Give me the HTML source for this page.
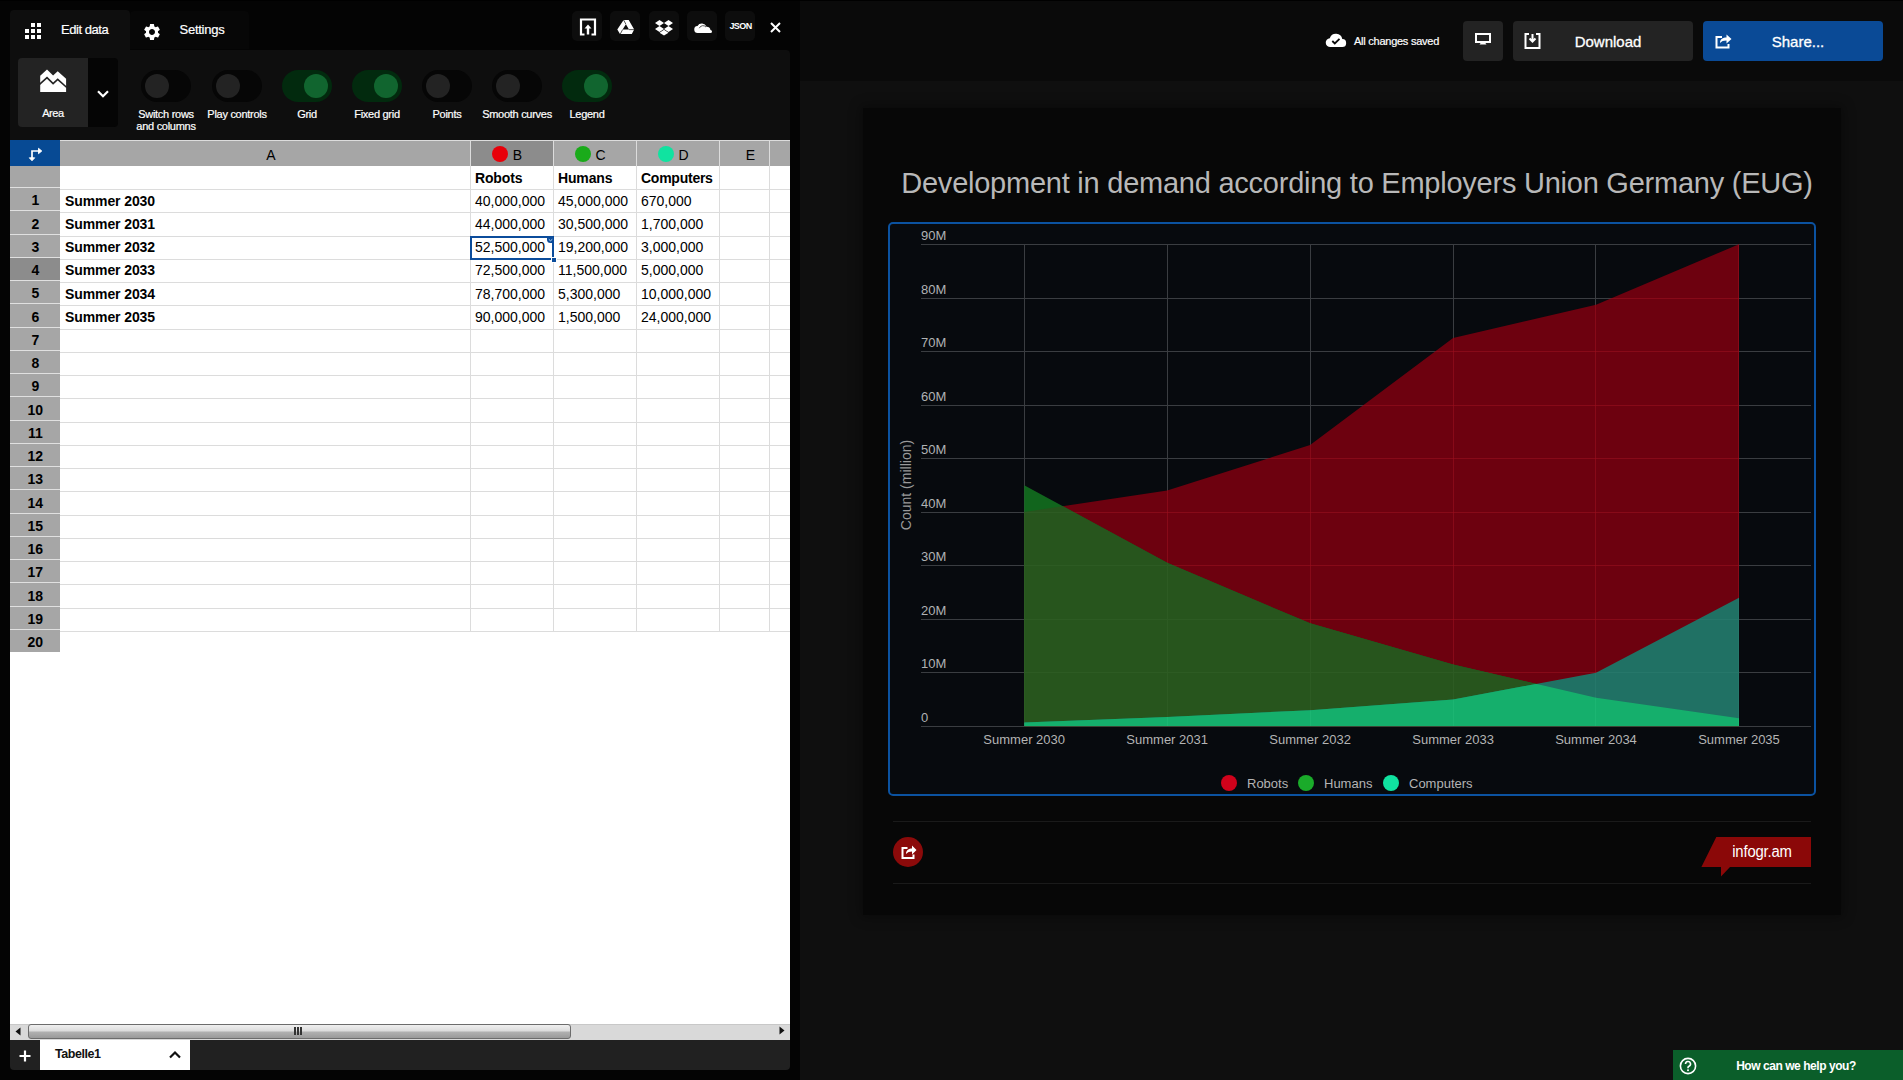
<!DOCTYPE html><html><head><meta charset="utf-8"><style>

*{box-sizing:border-box}
html,body{margin:0;padding:0}
body{width:1903px;height:1080px;overflow:hidden;position:relative;background:#040404;font-family:"Liberation Sans",sans-serif;color:#fff}
.ab{position:absolute}
.t{position:absolute;white-space:nowrap;line-height:1}
svg{position:absolute;overflow:visible}

</style></head><body>
<div class="ab" style="left:800px;top:0px;width:1103px;height:81px;background:#0a0a0a;"></div>
<div class="ab" style="left:800px;top:81px;width:1103px;height:999px;background:#0f0f0f;"></div>
<div class="ab" style="left:863px;top:108px;width:978px;height:807px;background:#070707;box-shadow:0 0 11px 3px rgba(0,0,0,0.32)"></div>
<svg style="left:1326px;top:33px" width="20" height="14" viewBox="0 0 20 14"><path d="M4.5 14h11.5a4 4 0 0 0 .3-8A6.5 6.5 0 0 0 3.8 5.2 4.4 4.4 0 0 0 4.5 14z" fill="#fff"/><path d="M6.3 8l2.5 2.5 4.7-4.7" fill="none" stroke="#0a0a0a" stroke-width="1.8"/></svg>
<div class="t" style="left:1354px;top:35.69px;font-size:11px;color:#fff;font-weight:normal;letter-spacing:-0.25px;-webkit-text-stroke:0.2px #fff">All changes saved</div>
<div class="ab" style="left:1463px;top:21px;width:40px;height:40px;background:#232323;border-radius:4px"></div>
<svg style="left:1475px;top:33px" width="16" height="12" viewBox="0 0 16 12"><rect x="1" y="1" width="14" height="8" fill="none" stroke="#fff" stroke-width="2"/><path d="M6 9.5h4l1.5 2h-7z" fill="#fff"/></svg>
<div class="ab" style="left:1513px;top:21px;width:180px;height:40px;background:#232323;border-radius:4px"></div>
<svg style="left:1524px;top:33px" width="18" height="16" viewBox="0 0 18 16"><path d="M5 1H1.5v14h14V1H12" fill="none" stroke="#fff" stroke-width="2"/><path d="M8.5 1v6.5M5.5 5.5l3 3 3-3" fill="none" stroke="#fff" stroke-width="2"/></svg>
<div class="t" style="left:1108px;width:1000px;text-align:center;top:34.20px;font-size:15px;color:#fff;font-weight:normal;-webkit-text-stroke:0.3px #fff">Download</div>
<div class="ab" style="left:1703px;top:21px;width:180px;height:40px;background:#0a4a96;border-radius:4px"></div>
<svg style="left:1715px;top:33px" width="17" height="16" viewBox="0 0 17 16"><path d="M7 4H1.5v10.5h12V11" fill="none" stroke="#fff" stroke-width="2"/><path d="M5 10c0-4 3-5.5 6.5-5.5V1.5L16.5 6l-5 4.5V7.5C8.5 7.5 6.5 8.3 5 10z" fill="#fff"/></svg>
<div class="t" style="left:1298px;width:1000px;text-align:center;top:34.20px;font-size:15px;color:#fff;font-weight:normal;-webkit-text-stroke:0.3px #fff">Share...</div>
<div class="t" style="left:857px;width:1000px;text-align:center;top:168.85px;font-size:29px;color:#b8b8b8;font-weight:normal;letter-spacing:-0.24px">Development in demand according to Employers Union Germany (EUG)</div>
<div class="ab" style="left:888px;top:222px;width:928px;height:574px;background:#070a0e;border:2px solid #0b52a0;border-radius:5px"></div>
<svg style="left:0;top:0" width="1903" height="1080"><line x1="921" x2="1811" y1="726.5" y2="726.5" stroke="#3a3d41" stroke-width="1"/><line x1="921" x2="1811" y1="672.5" y2="672.5" stroke="#3a3d41" stroke-width="1"/><line x1="921" x2="1811" y1="619.5" y2="619.5" stroke="#3a3d41" stroke-width="1"/><line x1="921" x2="1811" y1="565.5" y2="565.5" stroke="#3a3d41" stroke-width="1"/><line x1="921" x2="1811" y1="512.5" y2="512.5" stroke="#3a3d41" stroke-width="1"/><line x1="921" x2="1811" y1="458.5" y2="458.5" stroke="#3a3d41" stroke-width="1"/><line x1="921" x2="1811" y1="405.5" y2="405.5" stroke="#3a3d41" stroke-width="1"/><line x1="921" x2="1811" y1="351.5" y2="351.5" stroke="#3a3d41" stroke-width="1"/><line x1="921" x2="1811" y1="298.5" y2="298.5" stroke="#3a3d41" stroke-width="1"/><line x1="921" x2="1811" y1="244.5" y2="244.5" stroke="#3a3d41" stroke-width="1"/><line x1="1024.5" x2="1024.5" y1="244" y2="726" stroke="#3a3d41" stroke-width="1"/><line x1="1167.5" x2="1167.5" y1="244" y2="726" stroke="#3a3d41" stroke-width="1"/><line x1="1310.5" x2="1310.5" y1="244" y2="726" stroke="#3a3d41" stroke-width="1"/><line x1="1453.5" x2="1453.5" y1="244" y2="726" stroke="#3a3d41" stroke-width="1"/><line x1="1595.5" x2="1595.5" y1="244" y2="726" stroke="#3a3d41" stroke-width="1"/><line x1="1738.5" x2="1738.5" y1="244" y2="726" stroke="#3a3d41" stroke-width="1"/><defs><clipPath id="cpR"><polygon points="1024.20,511.98 1167.16,490.55 1310.12,445.03 1453.08,337.92 1596.04,304.71 1739.00,244.20 1739.00,726.20 1024.20,726.20"/></clipPath><clipPath id="cpH"><polygon points="1024.20,485.20 1167.16,562.85 1310.12,623.37 1453.08,664.61 1596.04,697.82 1739.00,718.17 1739.00,726.20 1024.20,726.20"/></clipPath></defs><g opacity="0.88"><polygon points="1024.20,511.98 1167.16,490.55 1310.12,445.03 1453.08,337.92 1596.04,304.71 1739.00,244.20 1739.00,726.20 1024.20,726.20" fill="#7c0010"/><g clip-path="url(#cpR)"><line x1="921" x2="1811" y1="726.5" y2="726.5" stroke="rgba(210,12,26,0.25)" stroke-width="1"/><line x1="921" x2="1811" y1="672.5" y2="672.5" stroke="rgba(210,12,26,0.25)" stroke-width="1"/><line x1="921" x2="1811" y1="619.5" y2="619.5" stroke="rgba(210,12,26,0.25)" stroke-width="1"/><line x1="921" x2="1811" y1="565.5" y2="565.5" stroke="rgba(210,12,26,0.25)" stroke-width="1"/><line x1="921" x2="1811" y1="512.5" y2="512.5" stroke="rgba(210,12,26,0.25)" stroke-width="1"/><line x1="921" x2="1811" y1="458.5" y2="458.5" stroke="rgba(210,12,26,0.25)" stroke-width="1"/><line x1="921" x2="1811" y1="405.5" y2="405.5" stroke="rgba(210,12,26,0.25)" stroke-width="1"/><line x1="921" x2="1811" y1="351.5" y2="351.5" stroke="rgba(210,12,26,0.25)" stroke-width="1"/><line x1="921" x2="1811" y1="298.5" y2="298.5" stroke="rgba(210,12,26,0.25)" stroke-width="1"/><line x1="921" x2="1811" y1="244.5" y2="244.5" stroke="rgba(210,12,26,0.25)" stroke-width="1"/><line x1="1024.5" x2="1024.5" y1="244" y2="726" stroke="rgba(210,12,26,0.25)" stroke-width="1"/><line x1="1167.5" x2="1167.5" y1="244" y2="726" stroke="rgba(210,12,26,0.25)" stroke-width="1"/><line x1="1310.5" x2="1310.5" y1="244" y2="726" stroke="rgba(210,12,26,0.25)" stroke-width="1"/><line x1="1453.5" x2="1453.5" y1="244" y2="726" stroke="rgba(210,12,26,0.25)" stroke-width="1"/><line x1="1595.5" x2="1595.5" y1="244" y2="726" stroke="rgba(210,12,26,0.25)" stroke-width="1"/><line x1="1738.5" x2="1738.5" y1="244" y2="726" stroke="rgba(210,12,26,0.25)" stroke-width="1"/></g><polygon points="1024.20,485.20 1167.16,562.85 1310.12,623.37 1453.08,664.61 1596.04,697.82 1739.00,718.17 1739.00,726.20 1024.20,726.20" fill="#137220"/><polygon points="1024.20,485.20 1167.16,562.85 1310.12,623.37 1453.08,664.61 1596.04,697.82 1739.00,718.17 1739.00,726.20 1024.20,726.20" fill="#2c6020" clip-path="url(#cpR)"/><polygon points="1024.20,722.61 1167.16,717.10 1310.12,710.13 1453.08,699.42 1596.04,672.64 1739.00,597.67 1739.00,726.20 1024.20,726.20" fill="#248070" clip-path="url(#cpR)"/><polygon points="1024.20,722.61 1167.16,717.10 1310.12,710.13 1453.08,699.42 1596.04,672.64 1739.00,597.67 1739.00,726.20 1024.20,726.20" fill="#18c679" clip-path="url(#cpH)"/></g></svg>
<div class="t" style="left:921px;top:710.80px;font-size:13px;color:#b0b2b4;font-weight:normal;">0</div>
<div class="t" style="left:921px;top:656.80px;font-size:13px;color:#b0b2b4;font-weight:normal;">10M</div>
<div class="t" style="left:921px;top:603.80px;font-size:13px;color:#b0b2b4;font-weight:normal;">20M</div>
<div class="t" style="left:921px;top:549.80px;font-size:13px;color:#b0b2b4;font-weight:normal;">30M</div>
<div class="t" style="left:921px;top:496.80px;font-size:13px;color:#b0b2b4;font-weight:normal;">40M</div>
<div class="t" style="left:921px;top:442.80px;font-size:13px;color:#b0b2b4;font-weight:normal;">50M</div>
<div class="t" style="left:921px;top:389.80px;font-size:13px;color:#b0b2b4;font-weight:normal;">60M</div>
<div class="t" style="left:921px;top:335.80px;font-size:13px;color:#b0b2b4;font-weight:normal;">70M</div>
<div class="t" style="left:921px;top:282.80px;font-size:13px;color:#b0b2b4;font-weight:normal;">80M</div>
<div class="t" style="left:921px;top:228.80px;font-size:13px;color:#b0b2b4;font-weight:normal;">90M</div>
<div class="t" style="left:524.2px;width:1000px;text-align:center;top:733.00px;font-size:13px;color:#b4b4b4;font-weight:normal;">Summer 2030</div>
<div class="t" style="left:667.1600000000001px;width:1000px;text-align:center;top:733.00px;font-size:13px;color:#b4b4b4;font-weight:normal;">Summer 2031</div>
<div class="t" style="left:810.1200000000001px;width:1000px;text-align:center;top:733.00px;font-size:13px;color:#b4b4b4;font-weight:normal;">Summer 2032</div>
<div class="t" style="left:953.0799999999999px;width:1000px;text-align:center;top:733.00px;font-size:13px;color:#b4b4b4;font-weight:normal;">Summer 2033</div>
<div class="t" style="left:1096.04px;width:1000px;text-align:center;top:733.00px;font-size:13px;color:#b4b4b4;font-weight:normal;">Summer 2034</div>
<div class="t" style="left:1239.0px;width:1000px;text-align:center;top:733.00px;font-size:13px;color:#b4b4b4;font-weight:normal;">Summer 2035</div>
<div class="t" style="left:906px;top:485px;font-size:14px;color:#9a9a9a;transform:translate(-50%,-50%) rotate(-90deg);">Count (million)</div>
<div class="ab" style="left:1221px;top:775px;width:16px;height:16px;background:#d0021b;border-radius:50%"></div>
<div class="t" style="left:1247px;top:777.00px;font-size:13px;color:#b4b4b4;font-weight:normal;">Robots</div>
<div class="ab" style="left:1298px;top:775px;width:16px;height:16px;background:#1aab2a;border-radius:50%"></div>
<div class="t" style="left:1324px;top:777.00px;font-size:13px;color:#b4b4b4;font-weight:normal;">Humans</div>
<div class="ab" style="left:1383px;top:775px;width:16px;height:16px;background:#10e3a0;border-radius:50%"></div>
<div class="t" style="left:1409px;top:777.00px;font-size:13px;color:#b4b4b4;font-weight:normal;">Computers</div>
<div class="ab" style="left:893px;top:821px;width:918px;height:1px;background:#1a1a1a;"></div>
<div class="ab" style="left:893px;top:883px;width:918px;height:1px;background:#1a1a1a;"></div>
<div class="ab" style="left:893px;top:837px;width:30px;height:30px;background:#8b0a0a;border-radius:50%"></div>
<svg style="left:901px;top:844px" width="16" height="15" viewBox="0 0 16 15"><path d="M6.5 4H1.5v10h11V10.5" fill="none" stroke="#fff" stroke-width="2"/><path d="M5 10c0-4 3-5.5 6-5.5V1.5L15.5 6l-4.5 4.5V7.5C8.5 7.5 6.5 8.3 5 10z" fill="#fff"/></svg>
<svg style="left:0;top:0" width="1" height="1"><path d="M1716.3 837H1811V867H1730L1721 876.5V867H1701.4z" fill="#8b0808"/></svg>
<div class="t" style="left:1261.5px;width:1000px;text-align:center;top:843.96px;font-size:16px;color:#fff;font-weight:normal;letter-spacing:-0.2px;transform:scaleX(0.93)">infogr.am</div>
<div class="ab" style="left:1673px;top:1050px;width:230px;height:30px;background:#0b5e2a;"></div>
<svg style="left:1679px;top:1057px" width="18" height="18" viewBox="0 0 18 18"><circle cx="9" cy="9" r="7.6" fill="none" stroke="#fff" stroke-width="1.6"/><path d="M6.5 7a2.5 2.5 0 1 1 3.5 2.3c-.7.3-1 .8-1 1.5v.5" fill="none" stroke="#fff" stroke-width="1.6"/><circle cx="9" cy="13.3" r="1" fill="#fff"/></svg>
<div class="t" style="left:1296px;width:1000px;text-align:center;top:1059.84px;font-size:12px;color:#fff;font-weight:bold;letter-spacing:-0.45px">How can we help you?</div>
<div class="ab" style="left:10px;top:10px;width:120px;height:41px;background:#0e0e0e;border-radius:4px 4px 0 0"></div>
<div class="ab" style="left:130px;top:11px;width:119px;height:38px;background:#070707;border-radius:4px 4px 0 0"></div>
<div class="ab" style="left:10px;top:50px;width:780px;height:90px;background:#0e0e0e;border-radius:0 4px 0 0"></div>
<div class="ab" style="left:31px;top:23px;width:4.3px;height:4px;background:#fff;"></div>
<div class="ab" style="left:37px;top:23px;width:4.3px;height:4px;background:#fff;"></div>
<div class="ab" style="left:25px;top:29px;width:4.3px;height:4px;background:#fff;"></div>
<div class="ab" style="left:31px;top:29px;width:4.3px;height:4px;background:#fff;"></div>
<div class="ab" style="left:37px;top:29px;width:4.3px;height:4px;background:#fff;"></div>
<div class="ab" style="left:25px;top:35px;width:4.3px;height:4px;background:#fff;"></div>
<div class="ab" style="left:31px;top:35px;width:4.3px;height:4px;background:#fff;"></div>
<div class="ab" style="left:37px;top:35px;width:4.3px;height:4px;background:#fff;"></div>
<div class="t" style="left:61px;top:23.00px;font-size:13px;color:#fff;font-weight:normal;letter-spacing:-0.45px;-webkit-text-stroke:0.2px #fff">Edit data</div>
<svg style="left:142px;top:21.5px" width="20" height="20" viewBox="0 0 24 24"><path fill="#fff" d="M19.14 12.94c.04-.3.06-.61.06-.94 0-.32-.02-.64-.07-.94l2.03-1.58a.49.49 0 0 0 .12-.61l-1.92-3.32a.49.49 0 0 0-.59-.22l-2.39.96c-.5-.38-1.03-.7-1.62-.94l-.36-2.54a.484.484 0 0 0-.48-.41h-3.84c-.24 0-.43.17-.47.41l-.36 2.54c-.59.24-1.13.57-1.62.94l-2.39-.96a.49.49 0 0 0-.59.22L2.74 8.87c-.12.21-.08.47.12.61l2.03 1.58c-.05.3-.09.63-.09.94s.02.64.07.94l-2.03 1.58a.49.49 0 0 0-.12.61l1.92 3.32c.12.22.37.29.59.22l2.39-.96c.5.38 1.03.7 1.62.94l.36 2.54c.05.24.24.41.48.41h3.84c.24 0 .44-.17.47-.41l.36-2.54c.59-.24 1.13-.56 1.62-.94l2.39.96c.22.08.47 0 .59-.22l1.92-3.32c.12-.22.07-.47-.12-.61l-2.01-1.58zM12 15.6c-1.98 0-3.6-1.62-3.6-3.6s1.62-3.6 3.6-3.6 3.6 1.62 3.6 3.6-1.62 3.6-3.6 3.6z"/></svg>
<div class="t" style="left:179.5px;top:23.00px;font-size:13px;color:#fff;font-weight:normal;letter-spacing:-0.25px;-webkit-text-stroke:0.2px #fff">Settings</div>
<div class="ab" style="left:572px;top:11px;width:30px;height:30px;background:#0d0d0d;border-radius:5px"></div>
<div class="ab" style="left:610px;top:11px;width:30px;height:30px;background:#0d0d0d;border-radius:5px"></div>
<div class="ab" style="left:649px;top:11px;width:30px;height:30px;background:#0d0d0d;border-radius:5px"></div>
<div class="ab" style="left:687px;top:11px;width:30px;height:30px;background:#0d0d0d;border-radius:5px"></div>
<div class="ab" style="left:725px;top:11px;width:30px;height:30px;background:#0d0d0d;border-radius:5px"></div>
<svg style="left:579px;top:18px" width="18" height="18" viewBox="0 0 18 18"><path d="M5.5 16.5H2V1.5h14v15h-3.5" fill="none" stroke="#fff" stroke-width="2.2"/><path d="M9 6.5l-3.5 4h2.3v6h2.4v-6h2.3z" fill="#fff"/></svg>
<svg style="left:0;top:0" width="1" height="1"><path fill-rule="evenodd" d="M623.6 20H628.7L634.2 29.4 631.8 34H620L617.3 29.4z M625.9 24.2L622.6 29.6H629z" fill="#fff"/><path d="M629 29.6H634.5M622.6 29.6L620.2 34.2M625.9 24.2L623.6 20" stroke="#0d0d0d" stroke-width="0.7" fill="none"/></svg>
<svg style="left:655px;top:20px" width="18" height="15" viewBox="0 0 18 15"><path d="M4.5 0L0 3l4.5 3L9 3z M13.5 0L9 3l4.5 3L18 3z M0 9l4.5 3L9 9 4.5 6z M18 9l-4.5 3L9 9l4.5-3z M4.5 12.7L9 15.5l4.5-2.8L9 9.8z" fill="#fff"/></svg>
<svg style="left:694px;top:21px" width="18" height="12" viewBox="0 0 18 12"><path d="M4 12h12.5a1.5 1.5 0 0 0 0-3 4 4 0 0 0-4-3.2A5 5 0 0 0 3.5 5 3.5 3.5 0 0 0 4 12z" fill="#fff"/><path d="M5.3 7.2A4 4 0 0 1 12 6" stroke="#0d0d0d" stroke-width="0.7" fill="none"/></svg>
<div class="t" style="left:240.5px;width:1000px;text-align:center;top:21.88px;font-size:9px;color:#fff;font-weight:bold;letter-spacing:-0.6px">JSON</div>
<svg style="left:770px;top:22px" width="11" height="11" viewBox="0 0 11 11"><path d="M1 1l9 9M10 1l-9 9" stroke="#fff" stroke-width="2"/></svg>
<div class="ab" style="left:18px;top:58px;width:70px;height:69px;background:#232323;border-radius:4px 0 0 4px"></div>
<div class="ab" style="left:88px;top:58px;width:30px;height:69px;background:#050505;border-radius:0 4px 4px 0"></div>
<svg style="left:0;top:0" width="1" height="1"><path d="M40.2 75.7L47 69.6 53.1 75.4 57.7 71.3 66.1 78.8V92H40.2z" fill="#fff"/><path d="M39.5 84.3L47 77.6 53.1 83.6 57.7 79.4 66.8 87.5" fill="none" stroke="#232323" stroke-width="1.6"/></svg>
<div class="t" style="left:-447px;width:1000px;text-align:center;top:108.29px;font-size:11px;color:#fff;font-weight:normal;letter-spacing:-0.4px;-webkit-text-stroke:0.2px #fff">Area</div>
<svg style="left:97px;top:90px" width="12" height="8" viewBox="0 0 12 8"><path d="M1 1.2l5 5 5-5" fill="none" stroke="#fff" stroke-width="2.2"/></svg>
<div class="ab" style="left:141px;top:70px;width:50px;height:32px;background:#060606;border-radius:16px"></div>
<div class="ab" style="left:145px;top:74px;width:24px;height:24px;background:#232323;border-radius:50%"></div>
<div class="t" style="left:-334px;width:1000px;text-align:center;top:109.29px;font-size:11px;color:#fff;font-weight:normal;letter-spacing:-0.28px;-webkit-text-stroke:0.2px #fff">Switch rows</div>
<div class="ab" style="left:212px;top:70px;width:50px;height:32px;background:#060606;border-radius:16px"></div>
<div class="ab" style="left:216px;top:74px;width:24px;height:24px;background:#232323;border-radius:50%"></div>
<div class="t" style="left:-263px;width:1000px;text-align:center;top:109.29px;font-size:11px;color:#fff;font-weight:normal;letter-spacing:-0.28px;-webkit-text-stroke:0.2px #fff">Play controls</div>
<div class="ab" style="left:282px;top:70px;width:50px;height:32px;background:#022a0e;border-radius:16px"></div>
<div class="ab" style="left:304px;top:74px;width:24px;height:24px;background:#11652f;border-radius:50%"></div>
<div class="t" style="left:-193px;width:1000px;text-align:center;top:109.29px;font-size:11px;color:#fff;font-weight:normal;letter-spacing:-0.28px;-webkit-text-stroke:0.2px #fff">Grid</div>
<div class="ab" style="left:352px;top:70px;width:50px;height:32px;background:#022a0e;border-radius:16px"></div>
<div class="ab" style="left:374px;top:74px;width:24px;height:24px;background:#11652f;border-radius:50%"></div>
<div class="t" style="left:-123px;width:1000px;text-align:center;top:109.29px;font-size:11px;color:#fff;font-weight:normal;letter-spacing:-0.28px;-webkit-text-stroke:0.2px #fff">Fixed grid</div>
<div class="ab" style="left:422px;top:70px;width:50px;height:32px;background:#060606;border-radius:16px"></div>
<div class="ab" style="left:426px;top:74px;width:24px;height:24px;background:#232323;border-radius:50%"></div>
<div class="t" style="left:-53px;width:1000px;text-align:center;top:109.29px;font-size:11px;color:#fff;font-weight:normal;letter-spacing:-0.28px;-webkit-text-stroke:0.2px #fff">Points</div>
<div class="ab" style="left:492px;top:70px;width:50px;height:32px;background:#060606;border-radius:16px"></div>
<div class="ab" style="left:496px;top:74px;width:24px;height:24px;background:#232323;border-radius:50%"></div>
<div class="t" style="left:17px;width:1000px;text-align:center;top:109.29px;font-size:11px;color:#fff;font-weight:normal;letter-spacing:-0.28px;-webkit-text-stroke:0.2px #fff">Smooth curves</div>
<div class="ab" style="left:562px;top:70px;width:50px;height:32px;background:#022a0e;border-radius:16px"></div>
<div class="ab" style="left:584px;top:74px;width:24px;height:24px;background:#11652f;border-radius:50%"></div>
<div class="t" style="left:87px;width:1000px;text-align:center;top:109.29px;font-size:11px;color:#fff;font-weight:normal;letter-spacing:-0.28px;-webkit-text-stroke:0.2px #fff">Legend</div>
<div class="t" style="left:-334px;width:1000px;text-align:center;top:121.49px;font-size:11px;color:#fff;font-weight:normal;letter-spacing:-0.28px;-webkit-text-stroke:0.2px #fff">and columns</div>
<div class="ab" style="left:10px;top:140px;width:780px;height:900px;background:#fff;"></div>
<div class="ab" style="left:60px;top:140px;width:730px;height:1px;background:#dcdcdc;"></div>
<div class="ab" style="left:60px;top:141px;width:730px;height:25px;background:#a6a6a6;"></div>
<div class="ab" style="left:471px;top:141px;width:82px;height:25px;background:#8c8c8c;"></div>
<div class="ab" style="left:10px;top:140px;width:50px;height:26px;background:#074a94;"></div>
<div class="ab" style="left:470px;top:140px;width:1px;height:26px;background:#dcdcdc;"></div>
<div class="ab" style="left:553px;top:140px;width:1px;height:26px;background:#dcdcdc;"></div>
<div class="ab" style="left:636px;top:140px;width:1px;height:26px;background:#dcdcdc;"></div>
<div class="ab" style="left:719px;top:140px;width:1px;height:26px;background:#dcdcdc;"></div>
<div class="ab" style="left:769px;top:140px;width:1px;height:26px;background:#dcdcdc;"></div>
<div class="t" style="left:-229px;width:1000px;text-align:center;top:148.15px;font-size:14px;color:#000;font-weight:normal;">A</div>
<div class="t" style="left:17.5px;width:1000px;text-align:center;top:148.15px;font-size:14px;color:#000;font-weight:normal;">B</div>
<div class="ab" style="left:492px;top:146px;width:16px;height:16px;border-radius:50%;background:#e8000a"></div>
<div class="t" style="left:100.5px;width:1000px;text-align:center;top:148.15px;font-size:14px;color:#000;font-weight:normal;">C</div>
<div class="ab" style="left:575px;top:146px;width:16px;height:16px;border-radius:50%;background:#1aab1a"></div>
<div class="t" style="left:183.5px;width:1000px;text-align:center;top:148.15px;font-size:14px;color:#000;font-weight:normal;">D</div>
<div class="ab" style="left:658px;top:146px;width:16px;height:16px;border-radius:50%;background:#10e3a0"></div>
<div class="t" style="left:250.5px;width:1000px;text-align:center;top:148.15px;font-size:14px;color:#000;font-weight:normal;">E</div>
<div class="ab" style="left:10px;top:166px;width:50px;height:487px;background:#a6a6a6;"></div>
<div class="ab" style="left:10px;top:187px;width:50px;height:1px;background:#e0e0e0;"></div>
<div class="ab" style="left:10px;top:210px;width:50px;height:1px;background:#e0e0e0;"></div>
<div class="ab" style="left:10px;top:234px;width:50px;height:1px;background:#e0e0e0;"></div>
<div class="ab" style="left:10px;top:257px;width:50px;height:1px;background:#e0e0e0;"></div>
<div class="ab" style="left:10px;top:280px;width:50px;height:1px;background:#e0e0e0;"></div>
<div class="ab" style="left:10px;top:303px;width:50px;height:1px;background:#e0e0e0;"></div>
<div class="ab" style="left:10px;top:327px;width:50px;height:1px;background:#e0e0e0;"></div>
<div class="ab" style="left:10px;top:350px;width:50px;height:1px;background:#e0e0e0;"></div>
<div class="ab" style="left:10px;top:373px;width:50px;height:1px;background:#e0e0e0;"></div>
<div class="ab" style="left:10px;top:396px;width:50px;height:1px;background:#e0e0e0;"></div>
<div class="ab" style="left:10px;top:420px;width:50px;height:1px;background:#e0e0e0;"></div>
<div class="ab" style="left:10px;top:443px;width:50px;height:1px;background:#e0e0e0;"></div>
<div class="ab" style="left:10px;top:466px;width:50px;height:1px;background:#e0e0e0;"></div>
<div class="ab" style="left:10px;top:489px;width:50px;height:1px;background:#e0e0e0;"></div>
<div class="ab" style="left:10px;top:513px;width:50px;height:1px;background:#e0e0e0;"></div>
<div class="ab" style="left:10px;top:536px;width:50px;height:1px;background:#e0e0e0;"></div>
<div class="ab" style="left:10px;top:559px;width:50px;height:1px;background:#e0e0e0;"></div>
<div class="ab" style="left:10px;top:582px;width:50px;height:1px;background:#e0e0e0;"></div>
<div class="ab" style="left:10px;top:606px;width:50px;height:1px;background:#e0e0e0;"></div>
<div class="ab" style="left:10px;top:629px;width:50px;height:1px;background:#e0e0e0;"></div>
<div class="ab" style="left:10px;top:258px;width:50px;height:22px;background:#8c8c8c;"></div>
<div class="ab" style="left:10px;top:652px;width:50px;height:388px;background:#fff;"></div>
<div class="ab" style="left:60px;top:189px;width:730px;height:1px;background:#dcdcdc;"></div>
<div class="ab" style="left:60px;top:212px;width:730px;height:1px;background:#dcdcdc;"></div>
<div class="ab" style="left:60px;top:236px;width:730px;height:1px;background:#dcdcdc;"></div>
<div class="ab" style="left:60px;top:259px;width:730px;height:1px;background:#dcdcdc;"></div>
<div class="ab" style="left:60px;top:282px;width:730px;height:1px;background:#dcdcdc;"></div>
<div class="ab" style="left:60px;top:305px;width:730px;height:1px;background:#dcdcdc;"></div>
<div class="ab" style="left:60px;top:329px;width:730px;height:1px;background:#dcdcdc;"></div>
<div class="ab" style="left:60px;top:352px;width:730px;height:1px;background:#dcdcdc;"></div>
<div class="ab" style="left:60px;top:375px;width:730px;height:1px;background:#dcdcdc;"></div>
<div class="ab" style="left:60px;top:398px;width:730px;height:1px;background:#dcdcdc;"></div>
<div class="ab" style="left:60px;top:422px;width:730px;height:1px;background:#dcdcdc;"></div>
<div class="ab" style="left:60px;top:445px;width:730px;height:1px;background:#dcdcdc;"></div>
<div class="ab" style="left:60px;top:468px;width:730px;height:1px;background:#dcdcdc;"></div>
<div class="ab" style="left:60px;top:491px;width:730px;height:1px;background:#dcdcdc;"></div>
<div class="ab" style="left:60px;top:515px;width:730px;height:1px;background:#dcdcdc;"></div>
<div class="ab" style="left:60px;top:538px;width:730px;height:1px;background:#dcdcdc;"></div>
<div class="ab" style="left:60px;top:561px;width:730px;height:1px;background:#dcdcdc;"></div>
<div class="ab" style="left:60px;top:584px;width:730px;height:1px;background:#dcdcdc;"></div>
<div class="ab" style="left:60px;top:608px;width:730px;height:1px;background:#dcdcdc;"></div>
<div class="ab" style="left:60px;top:631px;width:730px;height:1px;background:#dcdcdc;"></div>
<div class="ab" style="left:470px;top:166px;width:1px;height:466px;background:#dcdcdc;"></div>
<div class="ab" style="left:553px;top:166px;width:1px;height:466px;background:#dcdcdc;"></div>
<div class="ab" style="left:636px;top:166px;width:1px;height:466px;background:#dcdcdc;"></div>
<div class="ab" style="left:719px;top:166px;width:1px;height:466px;background:#dcdcdc;"></div>
<div class="ab" style="left:769px;top:166px;width:1px;height:466px;background:#dcdcdc;"></div>
<div class="t" style="left:-464.7px;width:1000px;text-align:center;top:193.35px;font-size:14px;color:#000;font-weight:bold;">1</div>
<div class="t" style="left:-464.7px;width:1000px;text-align:center;top:216.60px;font-size:14px;color:#000;font-weight:bold;">2</div>
<div class="t" style="left:-464.7px;width:1000px;text-align:center;top:239.85px;font-size:14px;color:#000;font-weight:bold;">3</div>
<div class="t" style="left:-464.7px;width:1000px;text-align:center;top:263.10px;font-size:14px;color:#000;font-weight:bold;">4</div>
<div class="t" style="left:-464.7px;width:1000px;text-align:center;top:286.35px;font-size:14px;color:#000;font-weight:bold;">5</div>
<div class="t" style="left:-464.7px;width:1000px;text-align:center;top:309.60px;font-size:14px;color:#000;font-weight:bold;">6</div>
<div class="t" style="left:-464.7px;width:1000px;text-align:center;top:332.85px;font-size:14px;color:#000;font-weight:bold;">7</div>
<div class="t" style="left:-464.7px;width:1000px;text-align:center;top:356.10px;font-size:14px;color:#000;font-weight:bold;">8</div>
<div class="t" style="left:-464.7px;width:1000px;text-align:center;top:379.35px;font-size:14px;color:#000;font-weight:bold;">9</div>
<div class="t" style="left:-464.7px;width:1000px;text-align:center;top:402.60px;font-size:14px;color:#000;font-weight:bold;">10</div>
<div class="t" style="left:-464.7px;width:1000px;text-align:center;top:425.85px;font-size:14px;color:#000;font-weight:bold;">11</div>
<div class="t" style="left:-464.7px;width:1000px;text-align:center;top:449.10px;font-size:14px;color:#000;font-weight:bold;">12</div>
<div class="t" style="left:-464.7px;width:1000px;text-align:center;top:472.35px;font-size:14px;color:#000;font-weight:bold;">13</div>
<div class="t" style="left:-464.7px;width:1000px;text-align:center;top:495.60px;font-size:14px;color:#000;font-weight:bold;">14</div>
<div class="t" style="left:-464.7px;width:1000px;text-align:center;top:518.85px;font-size:14px;color:#000;font-weight:bold;">15</div>
<div class="t" style="left:-464.7px;width:1000px;text-align:center;top:542.10px;font-size:14px;color:#000;font-weight:bold;">16</div>
<div class="t" style="left:-464.7px;width:1000px;text-align:center;top:565.35px;font-size:14px;color:#000;font-weight:bold;">17</div>
<div class="t" style="left:-464.7px;width:1000px;text-align:center;top:588.60px;font-size:14px;color:#000;font-weight:bold;">18</div>
<div class="t" style="left:-464.7px;width:1000px;text-align:center;top:611.85px;font-size:14px;color:#000;font-weight:bold;">19</div>
<div class="t" style="left:-464.7px;width:1000px;text-align:center;top:635.10px;font-size:14px;color:#000;font-weight:bold;">20</div>
<div class="t" style="left:475px;top:171.15px;font-size:14px;color:#000;font-weight:bold;letter-spacing:-0.15px">Robots</div>
<div class="t" style="left:558px;top:171.15px;font-size:14px;color:#000;font-weight:bold;letter-spacing:-0.15px">Humans</div>
<div class="t" style="left:641px;top:171.15px;font-size:14px;color:#000;font-weight:bold;letter-spacing:-0.25px">Computers</div>
<div class="t" style="left:65px;top:193.55px;font-size:14px;color:#000;font-weight:bold;letter-spacing:-0.1px">Summer 2030</div>
<div class="t" style="left:475px;top:193.55px;font-size:14px;color:#000;font-weight:normal;">40,000,000</div>
<div class="t" style="left:558px;top:193.55px;font-size:14px;color:#000;font-weight:normal;">45,000,000</div>
<div class="t" style="left:641px;top:193.55px;font-size:14px;color:#000;font-weight:normal;">670,000</div>
<div class="t" style="left:65px;top:216.80px;font-size:14px;color:#000;font-weight:bold;letter-spacing:-0.1px">Summer 2031</div>
<div class="t" style="left:475px;top:216.80px;font-size:14px;color:#000;font-weight:normal;">44,000,000</div>
<div class="t" style="left:558px;top:216.80px;font-size:14px;color:#000;font-weight:normal;">30,500,000</div>
<div class="t" style="left:641px;top:216.80px;font-size:14px;color:#000;font-weight:normal;">1,700,000</div>
<div class="t" style="left:65px;top:240.05px;font-size:14px;color:#000;font-weight:bold;letter-spacing:-0.1px">Summer 2032</div>
<div class="t" style="left:475px;top:240.05px;font-size:14px;color:#000;font-weight:normal;">52,500,000</div>
<div class="t" style="left:558px;top:240.05px;font-size:14px;color:#000;font-weight:normal;">19,200,000</div>
<div class="t" style="left:641px;top:240.05px;font-size:14px;color:#000;font-weight:normal;">3,000,000</div>
<div class="t" style="left:65px;top:263.30px;font-size:14px;color:#000;font-weight:bold;letter-spacing:-0.1px">Summer 2033</div>
<div class="t" style="left:475px;top:263.30px;font-size:14px;color:#000;font-weight:normal;">72,500,000</div>
<div class="t" style="left:558px;top:263.30px;font-size:14px;color:#000;font-weight:normal;">11,500,000</div>
<div class="t" style="left:641px;top:263.30px;font-size:14px;color:#000;font-weight:normal;">5,000,000</div>
<div class="t" style="left:65px;top:286.55px;font-size:14px;color:#000;font-weight:bold;letter-spacing:-0.1px">Summer 2034</div>
<div class="t" style="left:475px;top:286.55px;font-size:14px;color:#000;font-weight:normal;">78,700,000</div>
<div class="t" style="left:558px;top:286.55px;font-size:14px;color:#000;font-weight:normal;">5,300,000</div>
<div class="t" style="left:641px;top:286.55px;font-size:14px;color:#000;font-weight:normal;">10,000,000</div>
<div class="t" style="left:65px;top:309.80px;font-size:14px;color:#000;font-weight:bold;letter-spacing:-0.1px">Summer 2035</div>
<div class="t" style="left:475px;top:309.80px;font-size:14px;color:#000;font-weight:normal;">90,000,000</div>
<div class="t" style="left:558px;top:309.80px;font-size:14px;color:#000;font-weight:normal;">1,500,000</div>
<div class="t" style="left:641px;top:309.80px;font-size:14px;color:#000;font-weight:normal;">24,000,000</div>
<div class="ab" style="left:470px;top:236px;width:84px;height:24px;border:2px solid #0b4c9b"></div>
<div class="ab" style="left:551px;top:257px;width:6px;height:6px;background:#0b4c9b;border:1px solid #fff"></div>
<svg style="left:0;top:0" width="1" height="1"><path d="M547 238H554V243H550.5A3.5 3.5 0 0 1 547 239.5z" fill="#0b4c9b"/><path d="M548.8 239.3L550.5 240.8 552.3 239.3" fill="none" stroke="#cfe8ff" stroke-width="0.9"/></svg>
<svg style="left:0;top:0" width="1" height="1"><path d="M32 158.5V151H39" fill="none" stroke="#fff" stroke-width="1.7"/><path d="M38.5 148.3L41.8 151 38.5 153.7z M29.3 157.8L32 160.8 34.7 157.8z" fill="#fff" stroke="#fff" stroke-width="0.9" stroke-linejoin="round"/></svg>
<div class="ab" style="left:10px;top:1024px;width:780px;height:16px;background:#d9d9d9;border-top:1px solid #c8c8c8"></div>
<svg style="left:15px;top:1027px" width="6" height="9" viewBox="0 0 6 9"><path d="M5.5 0.5V8.5L0.5 4.5z" fill="#111"/></svg>
<svg style="left:779px;top:1026px" width="6" height="9" viewBox="0 0 6 9"><path d="M0.5 0.5V8.5L5.5 4.5z" fill="#111"/></svg>
<div class="ab" style="left:28px;top:1024px;width:543px;height:15px;background:linear-gradient(#f0f0f0,#dcdcdc 45%,#b0b0b0 55%,#9a9a9a);border:1px solid #6c6c6c;border-radius:3px"></div>
<div class="ab" style="left:294px;top:1027px;width:1.5px;height:8px;background:#333;"></div>
<div class="ab" style="left:297px;top:1027px;width:1.5px;height:8px;background:#333;"></div>
<div class="ab" style="left:300px;top:1027px;width:1.5px;height:8px;background:#333;"></div>
<div class="ab" style="left:10px;top:1040px;width:780px;height:30px;background:#212121;border-radius:0 0 4px 4px"></div>
<div class="ab" style="left:40px;top:1040px;width:150px;height:30px;background:#fff;"></div>
<div class="t" style="left:55px;top:1048.42px;font-size:12.5px;color:#111;font-weight:bold;letter-spacing:-0.45px">Tabelle1</div>
<svg style="left:169px;top:1051px" width="12" height="8" viewBox="0 0 12 8"><path d="M1 6.5l5-5 5 5" fill="none" stroke="#111" stroke-width="2.2"/></svg>
<svg style="left:19px;top:1050px" width="12" height="12" viewBox="0 0 12 12"><path d="M6 0.5v11M0.5 6h11" stroke="#fff" stroke-width="2.2"/></svg>
<div class="ab" style="left:0px;top:0px;width:1903px;height:1px;background:#000;"></div>
</body></html>
